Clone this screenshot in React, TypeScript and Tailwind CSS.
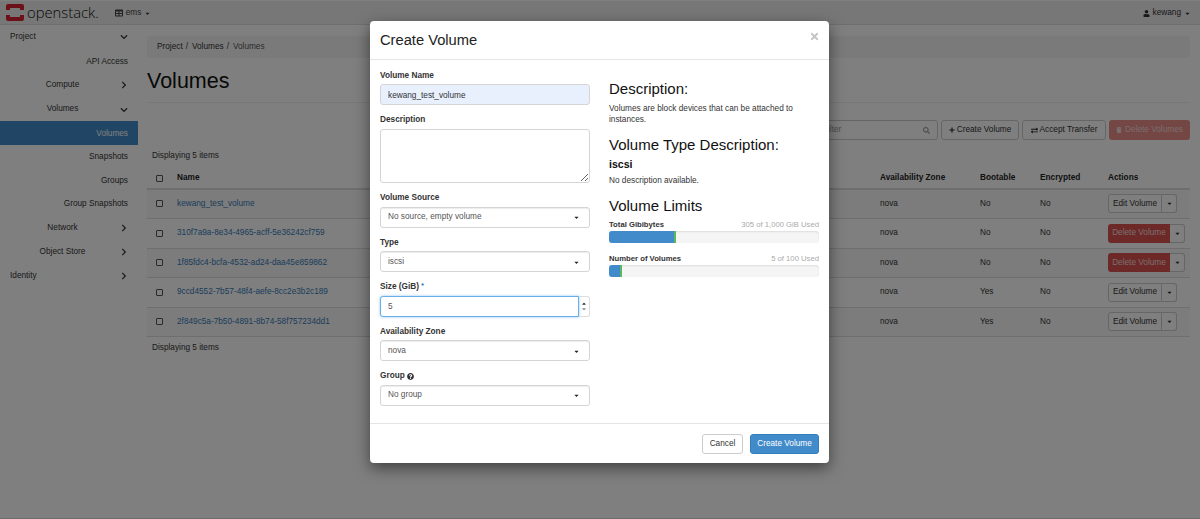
import React from 'react';
import {
  FaCaretDown,
  FaChevronDown,
  FaChevronRight,
  FaExchangeAlt,
  FaPlus,
  FaQuestionCircle,
  FaSearch,
  FaTable,
  FaTimes,
  FaTrash,
  FaUser,
} from 'react-icons/fa';

const sideItems = [
  { label: 'API Access', kind: 'leaf' },
  { label: 'Compute', kind: 'closed' },
  { label: 'Volumes', kind: 'open' },
  { label: 'Volumes', kind: 'active' },
  { label: 'Snapshots', kind: 'leaf' },
  { label: 'Groups', kind: 'leaf' },
  { label: 'Group Snapshots', kind: 'leaf' },
  { label: 'Network', kind: 'closed' },
  { label: 'Object Store', kind: 'closed' },
];

const rows = [
  { name: 'kewang_test_volume', boot: 'No', del: false },
  { name: '310f7a9a-8e34-4965-acff-5e36242cf759', boot: 'No', del: true },
  { name: '1f85fdc4-bcfa-4532-ad24-daa45e859862', boot: 'No', del: true },
  { name: '9ccd4552-7b57-48f4-aefe-8cc2e3b2c189', boot: 'Yes', del: false },
  { name: '2f849c5a-7b50-4891-8b74-58f757234dd1', boot: 'Yes', del: false },
];

const Logo = () => (
  <svg width="18" height="17" viewBox="0 0 18 17" className="shrink-0">
    <path
      d="M2 0h14a2 2 0 0 1 2 2v4h-4V4H4v2H0V2a2 2 0 0 1 2-2zM0 11h4v2h10v-2h4v4a2 2 0 0 1-2 2H2a2 2 0 0 1-2-2z"
      fill="#d8232f"
    />
  </svg>
);

const Checkbox = () => <span className="block w-[7px] h-[7px] rounded-[1px] border border-[#555] bg-white" />;

const Sidebar = () => (
  <div className="w-[138px] shrink-0 text-[8.25px] text-[#333]">
    <div className="h-[24.5px] flex items-center justify-between px-[10px]">
      <span>Project</span>
      <FaChevronDown className="text-[8px]" />
    </div>
    {sideItems.map((it, i) =>
      it.kind === 'leaf' || it.kind === 'active' ? (
        <div
          key={i}
          className={
            it.kind === 'active'
              ? 'h-[24px] pt-[1px] flex items-center justify-end pr-[10px] bg-[#428bca] text-white'
              : 'h-[23.4px] pt-[1px] flex items-center justify-end pr-[10px]'
          }
        >
          {it.label}
        </div>
      ) : (
        <div key={i} className="h-[24.2px] pt-[1px] flex items-center">
          <span className="w-[127px] text-center pr-[2px]">{it.label}</span>
          {it.kind === 'open' ? <FaChevronDown className="text-[8px] -ml-[7px]" /> : <FaChevronRight className="text-[8px] -ml-[7px]" />}
        </div>
      ),
    )}
    <div className="h-[24px] pt-[1px] flex items-center justify-between px-[10px]">
      <span>Identity</span>
      <FaChevronRight className="text-[8px]" />
    </div>
  </div>
);

const Toolbar = () => (
  <div className="h-[20px] mt-[17px] flex justify-end gap-[3px] text-[8.25px] text-[#333]">
    <div className="w-[118px] border border-[#ccc] rounded-[3px] bg-white flex items-center justify-between pl-[1px] pr-[7px] text-[#999]">
      <span className="pl-[1px]">Filter</span>
      <FaSearch className="text-[7px]" />
    </div>
    <div className="w-[78px] border border-[#ccc] rounded-[3px] bg-white flex items-center justify-center gap-[2px]">
      <FaPlus className="text-[6px] text-[#222]" />
      <span>Create Volume</span>
    </div>
    <div className="w-[84px] border border-[#ccc] rounded-[3px] bg-white flex items-center justify-center gap-[2px]">
      <FaExchangeAlt className="text-[7px] text-[#222]" />
      <span>Accept Transfer</span>
    </div>
    <div className="w-[81px] rounded-[3px] bg-[#e98c89] text-[#f5dcdb] flex items-center justify-center gap-[3px]">
      <FaTrash className="text-[6px]" />
      <span>Delete Volumes</span>
    </div>
  </div>
);

const Row = ({ name, boot, del, shaded }: { name: string; boot: string; del: boolean; shaded: boolean }) => (
  <div className={`h-[29.5px] flex items-center border-b border-[#ddd] ${shaded ? 'bg-[#f9f9f9]' : ''}`}>
    <div className="w-[30px] pl-[9px] shrink-0">
      <Checkbox />
    </div>
    <div className="w-[703px] shrink-0 text-[#337ab7]">{name}</div>
    <div className="w-[100px] shrink-0">nova</div>
    <div className="w-[60px] shrink-0">{boot}</div>
    <div className="w-[68px] shrink-0">No</div>
    {del ? (
      <div className="flex h-[19px]">
        <div className="w-[62px] bg-[#d9534f] text-[#f7dcdb] rounded-l-[3px] flex items-center justify-center">Delete Volume</div>
        <div className="w-[15px] border border-l-0 border-[#ccc] rounded-r-[3px] bg-white flex items-center justify-center">
          <FaCaretDown className="text-[7px]" />
        </div>
      </div>
    ) : (
      <div className="flex h-[19px]">
        <div className="w-[54px] border border-[#ccc] bg-white rounded-l-[3px] flex items-center justify-center">Edit Volume</div>
        <div className="w-[15px] border border-l-0 border-[#ccc] rounded-r-[3px] bg-white flex items-center justify-center">
          <FaCaretDown className="text-[7px]" />
        </div>
      </div>
    )}
  </div>
);

const Page = () => (
  <div className="flex flex-col h-full bg-white border-b border-[#ddd]">
    <div className="h-[24px] shrink-0 mt-[1px] bg-[#eeeeee] border-b border-[#dcdcdc] flex items-center pl-[6px] pr-[9px]">
      <Logo />
      <span className="ml-[3px] text-[14.8px] font-['Open_Sans',sans-serif] font-light text-[#111]">openstack.</span>
      <span className="ml-[16px] pt-[1px] flex items-center gap-[3px] text-[8.25px] text-[#444]">
        <FaTable className="text-[8px]" />
        ems
        <FaCaretDown className="text-[7px]" />
      </span>
      <span className="ml-auto pt-[1px] flex items-center gap-[3px] text-[8.25px] text-[#333]">
        <FaUser className="text-[7px]" />
        kewang
        <FaCaretDown className="text-[7px]" />
      </span>
    </div>
    <div className="flex flex-1 pr-[10px]">
      <Sidebar />
      <div className="flex-1 ml-[9px] pt-[11px] text-[8.25px] text-[#333]">
        <div className="h-[22px] pt-[1px] rounded-[3px] bg-[#f5f5f5] flex items-center pl-[10px] gap-[3px]">
          <span>Project</span>
          <span>/</span>
          <span className="ml-[1px]">Volumes</span>
          <span>/</span>
          <span className="ml-[1px] text-[#555]">Volumes</span>
        </div>
        <div className="mt-[12px] h-[32px] text-[21.5px] leading-[22px] text-[#111]">Volumes</div>
        <div className="border-t border-[#eeeeee]" />
        <Toolbar />
        <div className="mt-[10px] pl-[5px] leading-[12px]">Displaying 5 items</div>
        <div className="mt-[7px] h-[20.5px] flex items-center font-bold text-[#222] border-b-2 border-[#ddd]">
          <div className="w-[30px] pl-[9px] shrink-0">
            <Checkbox />
          </div>
          <div className="w-[703px] shrink-0">Name</div>
          <div className="w-[100px] shrink-0">Availability Zone</div>
          <div className="w-[60px] shrink-0">Bootable</div>
          <div className="w-[68px] shrink-0">Encrypted</div>
          <div>Actions</div>
        </div>
        {rows.map((r, i) => (
          <Row key={r.name} name={r.name} boot={r.boot} del={r.del} shaded={i % 2 === 0} />
        ))}
        <div className="mt-[4.5px] pl-[5px] leading-[12px]">Displaying 5 items</div>
      </div>
    </div>
  </div>
);

const Field = ({ label, children, extra }: { label: string; children: React.ReactNode; extra?: React.ReactNode }) => (
  <div className="mb-[8.5px]">
    <div className="h-[12px] pt-[2px] mb-[3px] flex items-center gap-[2px] text-[8.25px] font-bold text-[#333]">
      {label}
      {extra}
    </div>
    {children}
  </div>
);

const SelectBox = ({ value }: { value: string }) => (
  <div className="h-[21px] pt-[1px] border border-[#d5d5d5] rounded-[3px] bg-white flex items-center justify-between pl-[7px] pr-[9px] text-[8.25px] text-[#555] shadow-[inset_0_1px_1px_rgba(0,0,0,.075)]">
    <span>{value}</span>
    <FaCaretDown className="text-[7px] text-[#222]" />
  </div>
);

const Limit = ({ title, used, blue, green }: { title: string; used: string; blue: string; green: string }) => (
  <div>
    <div className="h-[11px] flex items-center justify-between text-[7.7px]">
      <span className="font-bold text-[#333]">{title}</span>
      <span className="text-[#aaa]">{used}</span>
    </div>
    <div className="h-[12px] rounded-[3px] bg-[#f5f5f5] flex overflow-hidden shadow-[inset_0_1px_2px_rgba(0,0,0,.1)]">
      <div className={`${blue} bg-[#428bca]`} />
      <div className={`${green} bg-[#5cb85c]`} />
    </div>
  </div>
);

const Modal = () => (
  <div className="absolute left-[370px] top-[21px] w-[459px] h-[442px] bg-white rounded-[4px] shadow-[0_5px_15px_rgba(0,0,0,.5)] flex flex-col">
    <div className="h-[39px] shrink-0 border-b border-[#e5e5e5] flex items-center justify-between pl-[10px] pr-[9px]">
      <span className="text-[14.7px] text-[#222]">Create Volume</span>
      <FaTimes className="text-[11px] text-[#c4c4c4] -mt-[7px]" />
    </div>
    <div className="flex-1 flex pt-[9px] px-[10px] gap-[19px]">
      <div className="w-[210px] shrink-0">
        <Field label="Volume Name">
          <input
            readOnly
            value="kewang_test_volume"
            className="block w-full h-[21px] pt-[1px] border border-[#d5d5d5] rounded-[3px] bg-[#e8f0fe] px-[7px] text-[8.25px] text-[#333] outline-none"
          />
        </Field>
        <Field label="Description">
          <textarea readOnly className="block w-full h-[54.5px] border border-[#d5d5d5] rounded-[3px] bg-white outline-none" />
        </Field>
        <Field label="Volume Source">
          <SelectBox value="No source, empty volume" />
        </Field>
        <Field label="Type">
          <SelectBox value="iscsi" />
        </Field>
        <Field label="Size (GiB)" extra={<span className="text-[#337ab7] text-[8px] -mt-[3px]">*</span>}>
          <div className="flex h-[21px]">
            <input
              readOnly
              value="5"
              className="w-[199px] h-full pt-[1px] border border-[#66afe9] rounded-l-[3px] bg-white px-[7px] text-[8.25px] text-[#555] outline-none shadow-[0_0_3px_rgba(102,175,233,.7)]"
            />
            <div className="w-[11px] h-full border border-l-0 border-[#ddd] rounded-r-[3px] flex flex-col items-center justify-center text-[6px] text-[#333]">
              <FaCaretDown className="rotate-180 -mb-[1px]" />
              <FaCaretDown className="text-[#888]" />
            </div>
          </div>
        </Field>
        <Field label="Availability Zone">
          <SelectBox value="nova" />
        </Field>
        <Field label="Group" extra={<FaQuestionCircle className="text-[7px] text-[#333]" />}>
          <SelectBox value="No group" />
        </Field>
      </div>
      <div className="w-[210px] shrink-0 text-[8.25px] text-[#333]">
        <div className="mt-[11px] text-[15px] leading-[18px] text-[#111]">Description:</div>
        <div className="mt-[5px] leading-[11px]">Volumes are block devices that can be attached to instances.</div>
        <div className="mt-[11px] text-[15px] leading-[18px] text-[#111]">Volume Type Description:</div>
        <div className="mt-[3px] text-[10.6px] leading-[14px] font-bold text-[#111]">iscsi</div>
        <div className="mt-[4px] leading-[11px]">No description available.</div>
        <div className="mt-[11px] text-[15px] leading-[18px] text-[#111]">Volume Limits</div>
        <div className="mt-[4.5px]">
          <Limit title="Total Gibibytes" used="305 of 1,000 GiB Used" blue="w-[65px]" green="w-[2px]" />
        </div>
        <div className="mt-[11px]">
          <Limit title="Number of Volumes" used="5 of 100 Used" blue="w-[11px]" green="w-[2px]" />
        </div>
      </div>
    </div>
    <div className="h-[40px] shrink-0 border-t border-[#e5e5e5] flex items-center justify-end gap-[7px] pr-[10px] text-[8.25px]">
      <div className="w-[41px] h-[20px] pt-[1px] border border-[#ccc] rounded-[3px] flex items-center justify-center text-[#333]">Cancel</div>
      <div className="w-[69px] h-[20px] pt-[1px] border border-[#357ebd] bg-[#428bca] rounded-[3px] flex items-center justify-center text-white">Create Volume</div>
    </div>
  </div>
);

const App: React.FC = () => {
  return (
    <div className="relative w-[1200px] h-[519px] overflow-hidden font-['Liberation_Sans',Arial,sans-serif]">
      <Page />
      <div className="absolute inset-0 bg-black opacity-50" />
      <Modal />
    </div>
  );
};

export default App;
